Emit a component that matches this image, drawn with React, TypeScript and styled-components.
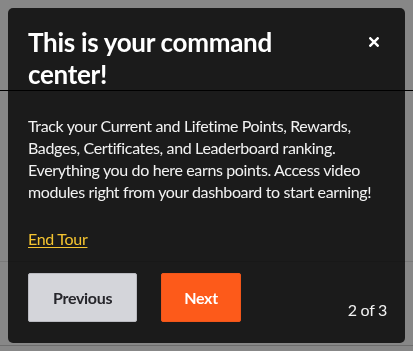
import React from "react";
import styled, { createGlobalStyle } from "styled-components";

const Global = createGlobalStyle`
  html, body { margin: 0; padding: 0; background: #ffffff; }
  body { font-family: Lato, "Noto Sans", "Liberation Sans", sans-serif; }
  * { box-sizing: border-box; }
`;

const Page = styled.div`
  display: flex;
  flex-direction: column;
  height: 351px;
`;

const PageBand = styled.div<{ $h: number; $line: string }>`
  height: ${(p) => p.$h}px;
  border-bottom: 1px solid ${(p) => p.$line};
  flex: none;
`;

const Overlay = styled.div`
  position: fixed;
  inset: 0;
  background: rgba(0, 0, 0, 0.47);
  display: flex;
  align-items: flex-start;
  padding: 8px;
`;

const Modal = styled.div`
  width: 400px;
  background: rgba(0, 0, 0, 0.8);
  border-radius: 5px;
  color: #ffffff;
  display: flex;
  flex-direction: column;
`;

const Header = styled.div`
  display: flex;
  align-items: flex-start;
  justify-content: space-between;
  gap: 12px;
  padding: 18px 16px 0 20px;
`;

const Title = styled.h2`
  margin: 0;
  font-size: 26px;
  line-height: 32px;
  font-weight: 700;
  letter-spacing: -0.3px;
  color: #ffffff;
`;

const CloseButton = styled.button`
  flex: none;
  width: 30px;
  height: 32px;
  border: 0;
  padding: 0;
  background: transparent;
  color: #ffffff;
  display: flex;
  align-items: center;
  justify-content: center;
  cursor: pointer;
`;

const Body = styled.div`
  padding: 25px 20px 13px 20px;
  display: flex;
  flex-direction: column;
  gap: 25px;
`;

const Text = styled.p`
  margin: 0;
  font-size: 16px;
  line-height: 22px;
  letter-spacing: -0.36px;
  color: #f2f2f2;
`;

const EndTour = styled.a`
  font-size: 16px;
  line-height: 22px;
  letter-spacing: -0.3px;
  color: #f4c430;
  text-decoration: underline;
  text-underline-offset: 2px;
  align-self: flex-start;
  cursor: pointer;
`;

const Footer = styled.div`
  display: flex;
  align-items: flex-end;
  padding: 10px 20px 21px 20px;
  gap: 24px;
`;

const Button = styled.button<{ $primary?: boolean }>`
  height: 49px;
  padding: 0 ${(p) => (p.$primary ? 22 : 24)}px;
  border-radius: 2px;
  font-family: inherit;
  font-size: 16px;
  font-weight: 700;
  letter-spacing: -0.3px;
  cursor: pointer;
  border: 1px solid ${(p) => (p.$primary ? "#f0561a" : "#b9bac0")};
  background: ${(p) => (p.$primary ? "#fd5a1a" : "#d4d5da")};
  color: ${(p) => (p.$primary ? "#ffffff" : "#26262b")};
`;

const Counter = styled.span`
  margin-left: auto;
  margin-right: -2px;
  font-size: 16px;
  line-height: 24px;
  letter-spacing: -0.3px;
  color: #f2f2f2;
`;

export default function App() {
  return (
    <>
      <Global />
      <Page>
        <PageBand $h={91} $line="#000000" />
        <PageBand $h={171} $line="#e4e4e4" />
        <PageBand $h={84} $line="#cfcfcf" />
      </Page>
      <Overlay>
        <Modal role="dialog">
          <Header>
            <Title>This is your command center!</Title>
            <CloseButton aria-label="Close">
              <svg width="10" height="10" viewBox="0 0 10 10">
                <path d="M1.3 1.3 L8.7 8.7 M8.7 1.3 L1.3 8.7" stroke="#ffffff" strokeWidth="2.4" strokeLinecap="square" />
              </svg>
            </CloseButton>
          </Header>
          <Body>
            <Text>
              Track your Current and Lifetime Points, Rewards, Badges, Certificates, and Leaderboard ranking.
              Everything you do here earns points. Access video modules right from your dashboard to start earning!
            </Text>
            <EndTour>End Tour</EndTour>
          </Body>
          <Footer>
            <Button>Previous</Button>
            <Button $primary>Next</Button>
            <Counter>2 of 3</Counter>
          </Footer>
        </Modal>
      </Overlay>
    </>
  );
}
